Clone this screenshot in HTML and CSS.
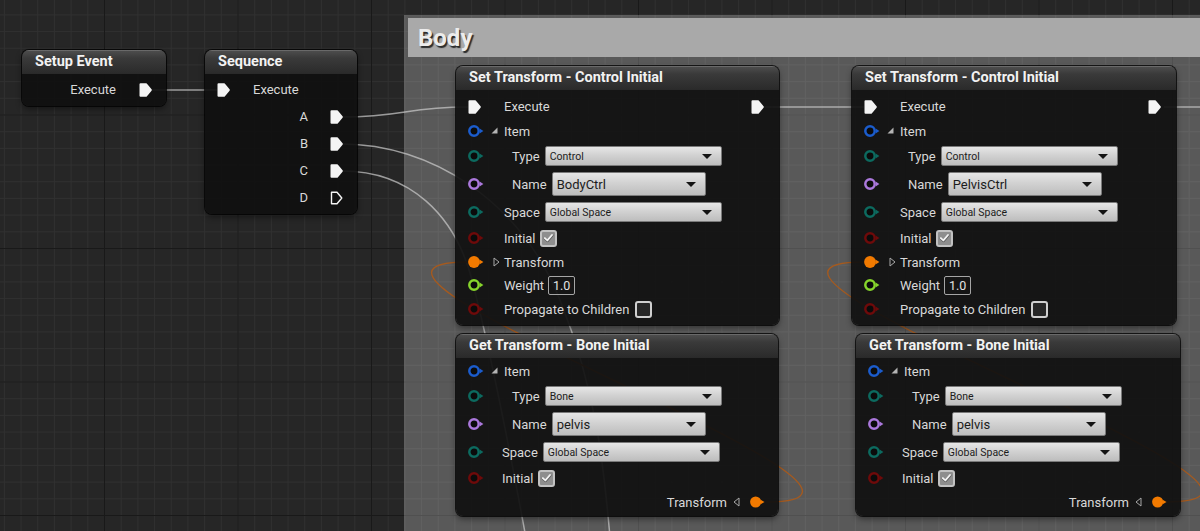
FILE: index.html
```html
<!DOCTYPE html>
<html>
<head>
<meta charset="utf-8">
<title>Control Rig Graph</title>
<link rel="stylesheet" href="styles.css">
</head>
<body>
<svg class="defs" aria-hidden="true">
  <symbol id="exec" viewBox="0 0 13 14">
    <path d="M1.5 1.2 H7 L11.8 7 L7 12.8 H1.5 Z" fill="currentColor" stroke="currentColor" stroke-width="2" stroke-linejoin="round"/>
  </symbol>
  <symbol id="exec-open" viewBox="0 0 13 14">
    <path d="M1.5 1.2 H7 L11.8 7 L7 12.8 H1.5 Z" fill="none" stroke="currentColor" stroke-width="1.4" stroke-linejoin="round"/>
  </symbol>
  <symbol id="pin" viewBox="0 0 17 12">
    <circle cx="6" cy="6" r="4.7" fill="#0b0b0b" stroke="currentColor" stroke-width="2.5"/>
    <polygon points="11.6,3.6 15.4,6 11.6,8.4" fill="currentColor"/>
  </symbol>
  <symbol id="pin-full" viewBox="0 0 17 12">
    <circle cx="6" cy="6" r="5.9" fill="currentColor"/>
    <polygon points="11.4,3.6 15.4,6 11.4,8.4" fill="currentColor"/>
  </symbol>
  <symbol id="tick" viewBox="0 0 16 16">
    <path d="M3.6 8.6 L6.8 11.6 L12.6 4.8" fill="none" stroke="#5a5a5a" stroke-width="3.2" stroke-linecap="round" stroke-linejoin="round"/>
    <path d="M3.4 8 L6.6 11 L12.4 4.2" fill="none" stroke="#f2f2f2" stroke-width="2.2" stroke-linecap="round" stroke-linejoin="round"/>
  </symbol>
</svg>

<div class="graph">
  <div class="comment">
    <div class="comment-title">Body</div>
  </div>

  <svg class="wires" width="1200" height="531" viewBox="0 0 1200 531">
    <path class="wire-exec" d="M152,90 L217,90"/>
    <path class="wire-exec" d="M342,117 C405,117 405,107 468,107"/>
    <path class="wire-exec" d="M342,144 C430,144 520,200 560,300 S605,480 612,560"/>
    <path class="wire-exec" d="M342,171 C410,171 455,215 472,280 S510,450 530,560"/>
    <path class="wire-exec" d="M764,107 L864,107"/>
    <path class="wire-exec" d="M1164,107 L1220,107"/>
    <path class="wire-xform" d="M766,502 C966,502 268,262 468,262"/>
    <path class="wire-xform" d="M1166,502 C1366,502 664,262 864,262"/>
  </svg>

  <!-- Setup Event -->
  <div class="node node-setup">
    <div class="node-title">Setup Event</div>
    <div class="node-body body-event">
      <div class="row row-out">
        <span class="label">Execute</span>
        <svg class="exec"><use href="#exec"/></svg>
      </div>
    </div>
  </div>

  <!-- Sequence -->
  <div class="node node-sequence">
    <div class="node-title">Sequence</div>
    <div class="node-body body-event">
      <div class="row row-in">
        <svg class="exec"><use href="#exec"/></svg>
        <span class="label label-after-pin">Execute</span>
      </div>
      <div class="row row-out seq-out"><span class="label">A</span><svg class="exec"><use href="#exec"/></svg></div>
      <div class="row row-out seq-out"><span class="label">B</span><svg class="exec"><use href="#exec"/></svg></div>
      <div class="row row-out seq-out"><span class="label">C</span><svg class="exec"><use href="#exec"/></svg></div>
      <div class="row row-out seq-out"><span class="label">D</span><svg class="exec"><use href="#exec-open"/></svg></div>
    </div>
  </div>

  <!-- Set Transform 1 -->
  <div class="node node-set set-a">
    <div class="node-title">Set Transform - Control Initial</div>
    <div class="node-body body-set">
      <div class="row r-exec">
        <span class="slot"><svg class="exec"><use href="#exec"/></svg></span>
        <span class="label">Execute</span>
        <svg class="exec exec-right"><use href="#exec"/></svg>
      </div>
      <div class="row r-item">
        <span class="slot"><svg class="pin c-struct"><use href="#pin"/></svg><svg class="exp" viewBox="0 0 7 7"><polygon points="6.5,0.5 6.5,6.5 0.5,6.5"/></svg></span>
        <span class="label">Item</span>
      </div>
      <div class="row r-type">
        <span class="slot"><svg class="pin c-enum"><use href="#pin"/></svg></span>
        <span class="label label-sub">Type</span>
        <div class="combo combo-wide"><span>Control</span><i class="caret"></i></div>
      </div>
      <div class="row r-name">
        <span class="slot"><svg class="pin c-name"><use href="#pin"/></svg></span>
        <span class="label label-sub">Name</span>
        <div class="combo combo-name"><span>BodyCtrl</span><i class="caret"></i></div>
      </div>
      <div class="row r-space">
        <span class="slot"><svg class="pin c-enum"><use href="#pin"/></svg></span>
        <span class="label">Space</span>
        <div class="combo combo-wide"><span>Global Space</span><i class="caret"></i></div>
      </div>
      <div class="row r-initial">
        <span class="slot"><svg class="pin c-bool"><use href="#pin"/></svg></span>
        <span class="label">Initial</span>
        <span class="check check-on"><svg><use href="#tick"/></svg></span>
      </div>
      <div class="row r-xform">
        <span class="slot"><svg class="pin c-xform"><use href="#pin-full"/></svg><svg class="exp-open" viewBox="0 0 7 10"><polygon points="1,1 6,5 1,9"/></svg></span>
        <span class="label">Transform</span>
      </div>
      <div class="row r-weight">
        <span class="slot"><svg class="pin c-float"><use href="#pin"/></svg></span>
        <span class="label">Weight</span>
        <span class="numbox">1.0</span>
      </div>
      <div class="row r-prop">
        <span class="slot"><svg class="pin c-bool"><use href="#pin"/></svg></span>
        <span class="label">Propagate to Children</span>
        <span class="check check-off"></span>
      </div>
    </div>
  </div>

  <!-- Set Transform 2 -->
  <div class="node node-set set-b">
    <div class="node-title">Set Transform - Control Initial</div>
    <div class="node-body body-set">
      <div class="row r-exec">
        <span class="slot"><svg class="exec"><use href="#exec"/></svg></span>
        <span class="label">Execute</span>
        <svg class="exec exec-right"><use href="#exec"/></svg>
      </div>
      <div class="row r-item">
        <span class="slot"><svg class="pin c-struct"><use href="#pin"/></svg><svg class="exp" viewBox="0 0 7 7"><polygon points="6.5,0.5 6.5,6.5 0.5,6.5"/></svg></span>
        <span class="label">Item</span>
      </div>
      <div class="row r-type">
        <span class="slot"><svg class="pin c-enum"><use href="#pin"/></svg></span>
        <span class="label label-sub">Type</span>
        <div class="combo combo-wide"><span>Control</span><i class="caret"></i></div>
      </div>
      <div class="row r-name">
        <span class="slot"><svg class="pin c-name"><use href="#pin"/></svg></span>
        <span class="label label-sub">Name</span>
        <div class="combo combo-name"><span>PelvisCtrl</span><i class="caret"></i></div>
      </div>
      <div class="row r-space">
        <span class="slot"><svg class="pin c-enum"><use href="#pin"/></svg></span>
        <span class="label">Space</span>
        <div class="combo combo-wide"><span>Global Space</span><i class="caret"></i></div>
      </div>
      <div class="row r-initial">
        <span class="slot"><svg class="pin c-bool"><use href="#pin"/></svg></span>
        <span class="label">Initial</span>
        <span class="check check-on"><svg><use href="#tick"/></svg></span>
      </div>
      <div class="row r-xform">
        <span class="slot"><svg class="pin c-xform"><use href="#pin-full"/></svg><svg class="exp-open" viewBox="0 0 7 10"><polygon points="1,1 6,5 1,9"/></svg></span>
        <span class="label">Transform</span>
      </div>
      <div class="row r-weight">
        <span class="slot"><svg class="pin c-float"><use href="#pin"/></svg></span>
        <span class="label">Weight</span>
        <span class="numbox">1.0</span>
      </div>
      <div class="row r-prop">
        <span class="slot"><svg class="pin c-bool"><use href="#pin"/></svg></span>
        <span class="label">Propagate to Children</span>
        <span class="check check-off"></span>
      </div>
    </div>
  </div>

  <!-- Get Transform 1 -->
  <div class="node node-get get-a">
    <div class="node-title">Get Transform - Bone Initial</div>
    <div class="node-body body-get">
      <div class="row r-item">
        <span class="slot"><svg class="pin c-struct"><use href="#pin"/></svg><svg class="exp" viewBox="0 0 7 7"><polygon points="6.5,0.5 6.5,6.5 0.5,6.5"/></svg></span>
        <span class="label">Item</span>
      </div>
      <div class="row r-type">
        <span class="slot"><svg class="pin c-enum"><use href="#pin"/></svg></span>
        <span class="label label-sub">Type</span>
        <div class="combo combo-wide"><span>Bone</span><i class="caret"></i></div>
      </div>
      <div class="row r-name">
        <span class="slot"><svg class="pin c-name"><use href="#pin"/></svg></span>
        <span class="label label-sub">Name</span>
        <div class="combo combo-name"><span>pelvis</span><i class="caret"></i></div>
      </div>
      <div class="row r-space">
        <span class="slot slot-get"><svg class="pin c-enum"><use href="#pin"/></svg></span>
        <span class="label">Space</span>
        <div class="combo combo-wide"><span>Global Space</span><i class="caret"></i></div>
      </div>
      <div class="row r-initial">
        <span class="slot slot-get"><svg class="pin c-bool"><use href="#pin"/></svg></span>
        <span class="label">Initial</span>
        <span class="check check-on"><svg><use href="#tick"/></svg></span>
      </div>
      <div class="row r-out">
        <span class="label">Transform</span>
        <svg class="exp-open exp-left" viewBox="0 0 7 10"><polygon points="6,1 1,5 6,9"/></svg>
        <svg class="pin pin-out c-xform"><use href="#pin-full"/></svg>
      </div>
    </div>
  </div>

  <!-- Get Transform 2 -->
  <div class="node node-get get-b">
    <div class="node-title">Get Transform - Bone Initial</div>
    <div class="node-body body-get">
      <div class="row r-item">
        <span class="slot"><svg class="pin c-struct"><use href="#pin"/></svg><svg class="exp" viewBox="0 0 7 7"><polygon points="6.5,0.5 6.5,6.5 0.5,6.5"/></svg></span>
        <span class="label">Item</span>
      </div>
      <div class="row r-type">
        <span class="slot"><svg class="pin c-enum"><use href="#pin"/></svg></span>
        <span class="label label-sub">Type</span>
        <div class="combo combo-wide"><span>Bone</span><i class="caret"></i></div>
      </div>
      <div class="row r-name">
        <span class="slot"><svg class="pin c-name"><use href="#pin"/></svg></span>
        <span class="label label-sub">Name</span>
        <div class="combo combo-name"><span>pelvis</span><i class="caret"></i></div>
      </div>
      <div class="row r-space">
        <span class="slot slot-get"><svg class="pin c-enum"><use href="#pin"/></svg></span>
        <span class="label">Space</span>
        <div class="combo combo-wide"><span>Global Space</span><i class="caret"></i></div>
      </div>
      <div class="row r-initial">
        <span class="slot slot-get"><svg class="pin c-bool"><use href="#pin"/></svg></span>
        <span class="label">Initial</span>
        <span class="check check-on"><svg><use href="#tick"/></svg></span>
      </div>
      <div class="row r-out">
        <span class="label">Transform</span>
        <svg class="exp-open exp-left" viewBox="0 0 7 10"><polygon points="6,1 1,5 6,9"/></svg>
        <svg class="pin pin-out c-xform"><use href="#pin-full"/></svg>
      </div>
    </div>
  </div>
</div>
</body>
</html>
```

FILE: styles.css
```css
* { box-sizing: border-box; }

body {
  margin: 0;
  background: #262626;
  font-family: Roboto, "Liberation Sans", Arial, sans-serif;
}

.defs {
  position: absolute;
  width: 0;
  height: 0;
  overflow: hidden;
}

/* ---------- canvas ---------- */
.graph {
  position: relative;
  width: 1200px;
  height: 531px;
  overflow: hidden;
  background-color: #262626;
  background-image:
    linear-gradient(to right, #191919 0, #191919 1px, transparent 1px),
    linear-gradient(to bottom, #191919 0, #191919 1px, transparent 1px),
    linear-gradient(to right, #303030 0, #303030 1px, transparent 1px),
    linear-gradient(to bottom, #303030 0, #303030 1px, transparent 1px);
  background-size:
    133.5px 133.5px,
    133.5px 133.5px,
    16.6875px 16.6875px,
    16.6875px 16.6875px;
  background-position: 104px 114.5px;
}

/* ---------- comment box ---------- */
.comment {
  position: absolute;
  left: 404px;
  top: 15px;
  width: 840px;
  height: 560px;
  padding: 3px 0 0 4px;
  background: rgba(255, 255, 255, 0.24);
}

.comment-title {
  height: 39px;
  line-height: 40px;
  padding-left: 10px;
  background: #a9a9a9;
  color: #ececec;
  font-size: 24px;
  font-weight: 700;
  text-shadow: 1.5px 2px 1px #2b2b2b;
}

/* ---------- wires ---------- */
.wires {
  position: absolute;
  left: 0;
  top: 0;
  pointer-events: none;
}

.wire-exec {
  fill: none;
  stroke: rgba(205, 205, 205, 0.7);
  stroke-width: 1.5;
}

.wire-xform {
  fill: none;
  stroke: #a65a1e;
  stroke-width: 1.4;
}

/* ---------- nodes ---------- */
.node {
  position: absolute;
  border-radius: 7px;
  overflow: hidden;
  background: rgba(16, 16, 16, 0.93);
  box-shadow: 0 0 0 1px rgba(0, 0, 0, 0.75), 0 3px 6px rgba(0, 0, 0, 0.45);
  color: #d8d8d8;
  font-size: 13px;
}

.node-title {
  height: 24px;
  line-height: 24px;
  padding-left: 13px;
  font-size: 14.5px;
  font-weight: 700;
  color: #f2f2f2;
  white-space: nowrap;
  background: linear-gradient(to bottom, #4f4f4f 0%, #3a3a3a 35%, #2b2b2b 100%);
  border-bottom: 1px solid rgba(0, 0, 0, 0.45);
  box-shadow: inset 0 1px 0 rgba(255, 255, 255, 0.16);
}

.node-setup    { left: 22px;  top: 50px; width: 144px; }
.node-sequence { left: 205px; top: 50px; width: 152px; }
.set-a { left: 456px; top: 66px;  width: 323px; }
.set-b { left: 852px; top: 66px;  width: 324px; }
.get-a { left: 456px; top: 334px; width: 322px; }
.get-b { left: 856px; top: 334px; width: 324px; }

.node-body { display: flex; flex-direction: column; }
.body-event { padding: 2px 0 3px; }
.body-set   { padding: 4px 0 4px; }
.body-get   { padding: 1px 0 3px; }

.row {
  display: flex;
  align-items: center;
  white-space: nowrap;
}

.label { line-height: 1; }

/* event / sequence rows */
.body-event .row { height: 27px; }
.row-out { justify-content: flex-end; padding-right: 14px; }
.row-out .label { margin-right: 23px; }
.seq-out .label { margin-right: 22px; min-width: 8px; text-align: center; }
.row-in { padding-left: 12px; }
.label-after-pin { margin-left: 23px; }

.exec {
  width: 13px;
  height: 14px;
  color: #f4f4f4;
  flex: none;
}

/* set / get rows */
.body-set .row, .body-get .row { padding-left: 12px; padding-right: 15px; }

.r-exec   { height: 25px; }
.r-item   { height: 24px; }
.r-type   { height: 26px; }
.r-name   { height: 30px; }
.r-space  { height: 26px; }
.r-initial{ height: 26px; }
.r-xform  { height: 22px; }
.r-weight { height: 24px; }
.r-prop   { height: 24px; }
.body-get .r-out { height: 22px; justify-content: flex-end; padding-right: 12px; }

.slot {
  width: 36px;
  flex: none;
  display: flex;
  align-items: center;
}

.slot-get { width: 34px; }

.exec-right { margin-left: auto; }

.pin {
  width: 17px;
  height: 12px;
  flex: none;
}

.c-struct { color: #1b5ccc; }
.c-enum   { color: #0c6a5f; }
.c-name   { color: #ab78dc; }
.c-bool   { color: #6e0a0a; }
.c-xform  { color: #f27a00; }
.c-float  { color: #86d42c; }

.exp {
  width: 7px;
  height: 7px;
  margin-left: 6px;
  margin-top: -2px;
  fill: #b4b4b4;
}

.exp-open {
  width: 7px;
  height: 10px;
  margin-left: 8px;
  fill: none;
  stroke: #a8a8a8;
  stroke-width: 1;
}

.exp-left { margin-left: 6px; margin-right: 10px; }
.pin-out { width: 16px; }

.label-sub { margin-left: 8px; }

/* combo boxes */
.combo {
  display: flex;
  align-items: center;
  margin-left: 5px;
  padding: 0 9px 0 4px;
  border-radius: 2px;
  border: 1px solid #7a7a7a;
  background: linear-gradient(to bottom, #e6e6e6 0%, #d2d2d2 45%, #bdbdbd 100%);
  color: #1c1c1c;
  flex: none;
}

.combo-wide {
  width: 177px;
  height: 20px;
  font-size: 10.5px;
}

.combo-name {
  width: 154px;
  height: 24px;
  font-size: 13px;
}

.caret {
  margin-left: auto;
  width: 0;
  height: 0;
  border-left: 5px solid transparent;
  border-right: 5px solid transparent;
  border-top: 5px solid #141414;
}

/* check boxes */
.check {
  flex: none;
  width: 17px;
  height: 17px;
  border-radius: 3px;
  display: flex;
  align-items: center;
  justify-content: center;
}

.check-on {
  margin-left: 4px;
  border: 2px solid #c2c2c2;
  background: #8e8e8e;
}

.check-on svg { width: 14px; height: 14px; }

.check-off {
  margin-left: 6px;
  border: 2px solid #cfcfcf;
  background: #262626;
}

.numbox {
  margin-left: 4px;
  width: 27px;
  height: 19px;
  border: 1px solid #a5a5a5;
  border-radius: 2px;
  line-height: 17px;
  text-align: center;
  font-size: 12.5px;
  color: #e2e2e2;
}
```
